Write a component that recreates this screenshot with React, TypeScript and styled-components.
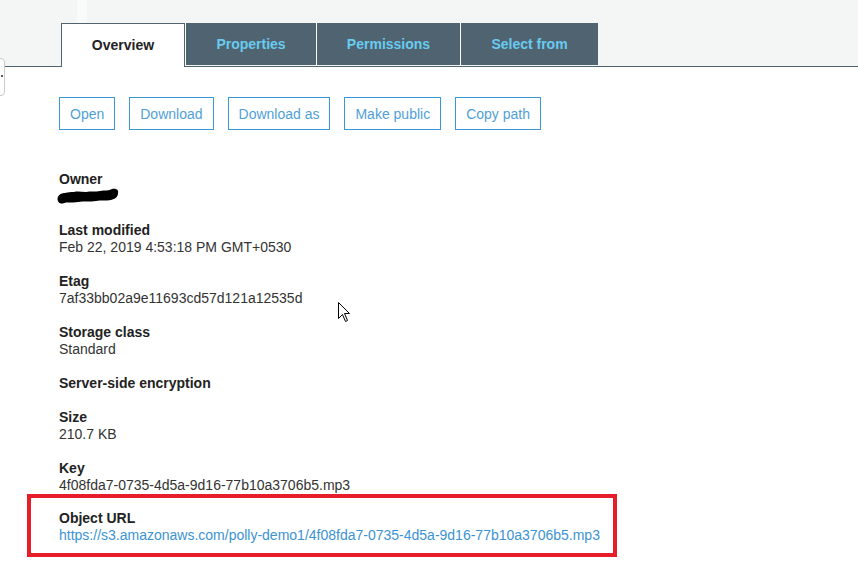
import styled, { createGlobalStyle } from "styled-components";

const GlobalStyle = createGlobalStyle`
  html, body {
    margin: 0;
    background: #fff;
    font-family: "Liberation Sans", Arial, sans-serif;
  }
`;

interface FieldData {
  label: string;
  value?: string;
  redacted?: boolean;
}

const fields: FieldData[] = [
  {label: "Owner", redacted: true},
  {label: "Last modified", value: "Feb 22, 2019 4:53:18 PM GMT+0530"},
  {label: "Etag", value: "7af33bb02a9e11693cd57d121a12535d"},
  {label: "Storage class", value: "Standard"},
  {label: "Server-side encryption"},
  {label: "Size", value: "210.7 KB"},
  {label: "Key", value: "4f08fda7-0735-4d5a-9d16-77b10a3706b5.mp3"},
];

const tabs = [
  {name: "Overview", width: 124},
  {name: "Properties", width: 131},
  {name: "Permissions", width: 144},
  {name: "Select from", width: 138},
];

const actions = ["Open", "Download", "Download as", "Make public", "Copy path"];

const objectUrl = "https://s3.amazonaws.com/polly-demo1/4f08fda7-0735-4d5a-9d16-77b10a3706b5.mp3";

export default function App() {
  return (
    <Page>
      <GlobalStyle />
      <TabStrip>
        {tabs.map((tab, i) => (
          <Tab key={tab.name} $active={i === 0} style={{width: tab.width}}>
            {tab.name}
          </Tab>
        ))}
      </TabStrip>
      <Handle />
      <Content>
        <Toolbar>
          {actions.map((a) => (
            <ActionButton key={a}>{a}</ActionButton>
          ))}
        </Toolbar>
        <Fields>
          {fields.map((f) => (
            <Field key={f.label}>
              <Label>{f.label}</Label>
              {f.redacted && <Scribble />}
              {f.value && <Value>{f.value}</Value>}
            </Field>
          ))}
          <Highlight>
            <Label>Object URL</Label>
            <Link href="#">{objectUrl}</Link>
          </Highlight>
        </Fields>
      </Content>
      <Cursor />
    </Page>
  );
}

// redacted owner name, a hand-drawn black blot
const Scribble = () => (
  <ScribbleSvg width="62" height="16" viewBox="0 0 62 16">
    <path
      d="M1 11 C1 7 4 5 8 5 C11 4 14 4 17 4 C21 3 25 4 29 4 C34 3 38 4 43 3 C48 2 52 3 55 1 C59 0 62 2 61 5
         C61 9 58 11 54 12 C49 13 44 12 39 13 C33 14 27 13 21 14 C15 15 10 14 6 15 C3 16 1 14 1 11 Z"
      fill="#000"
    />
    <circle cx="5" cy="11" r="4.5" fill="#000" />
  </ScribbleSvg>
);

const Cursor = () => (
  <CursorSvg width="13" height="21" viewBox="0 0 13 21">
    <path d="M0.5 0.5 L0.5 16.5 L4.5 12.5 L7.5 19.5 L9.5 18.5 L6.5 11.5 L11.5 11.5 Z" fill="#fff" stroke="#000" strokeWidth="1" />
  </CursorSvg>
);

const Page = styled.div`
  position: relative;
  width: 858px;
  height: 562px;
  overflow: hidden;
  background: #fff;
`;

const TabStrip = styled.div`
  display: flex;
  align-items: flex-start;
  padding: 23px 0 0 61px;
  height: 43px;
  background: linear-gradient(to right, #f4f5f5 0, #f4f5f5 77px, #f9fafa 77px, #f9fafa 87px, #f4f5f5 87px);
  border-bottom: 1px solid #4f6370;
`;

const Tab = styled.div<{ $active?: boolean }>`
  box-sizing: border-box;
  display: flex;
  align-items: center;
  justify-content: center;
  font-size: 14px;
  font-weight: bold;
  height: ${(p) => (p.$active ? "44px" : "42px")};
  padding-bottom: ${(p) => (p.$active ? "2px" : "0")};
  background: ${(p) => (p.$active ? "#fff" : "#4f6470")};
  color: ${(p) => (p.$active ? "#232323" : "#68cbf0")};
  border: ${(p) => (p.$active ? "1px solid #4f6370" : "none")};
  border-bottom: none;
  border-left: ${(p) => (p.$active ? "1px solid #4f6370" : "1px solid #fff")};
  margin-bottom: ${(p) => (p.$active ? "-1px" : "0")};
`;

const Handle = styled.div`
  position: absolute;
  left: -4px;
  top: 58px;
  width: 7px;
  height: 36px;
  border: 1px solid #c9cccc;
  border-radius: 4px;
  background: #fff;
  &::after {
    content: "";
    position: absolute;
    left: 4px;
    top: 16px;
    width: 2px;
    height: 2px;
    background: #555;
  }
`;

const Content = styled.div`
  padding: 30px 0 0 59px;
`;

const Toolbar = styled.div`
  display: flex;
  gap: 14px;
`;

const ActionButton = styled.button`
  height: 33px;
  padding: 0 10px;
  background: #fff;
  border: 1px solid #3c98d2;
  border-radius: 0;
  color: #519fd9;
  font-family: "Liberation Sans", Arial, sans-serif;
  font-size: 14px;
`;

const Fields = styled.div`
  display: flex;
  flex-direction: column;
  margin-top: 41px;
`;

const Field = styled.div`
  display: flex;
  flex-direction: column;
  align-items: flex-start;
  font-size: 14px;
  line-height: 17px;

  & + & {
    margin-top: 17px;
  }
`;

const Label = styled.div`
  font-weight: bold;
  color: #222;
  font-size: 14px;
  line-height: 17px;
`;

const Value = styled.div`
  color: #333;
`;

const ScribbleSvg = styled.svg`
  display: block;
  margin: 0 0 1px -2px;
`;

const Highlight = styled.div`
  box-sizing: border-box;
  width: 590px;
  margin: 0 0 0 -32px;
  padding: 12px 0 9px 28px;
  border: 4px solid #e81d2a;
  line-height: 17px;
`;

const Link = styled.a`
  display: block;
  color: #3b93d4;
  font-size: 14px;
  text-decoration: none;
`;

const CursorSvg = styled.svg`
  position: absolute;
  left: 338px;
  top: 302px;
`;
